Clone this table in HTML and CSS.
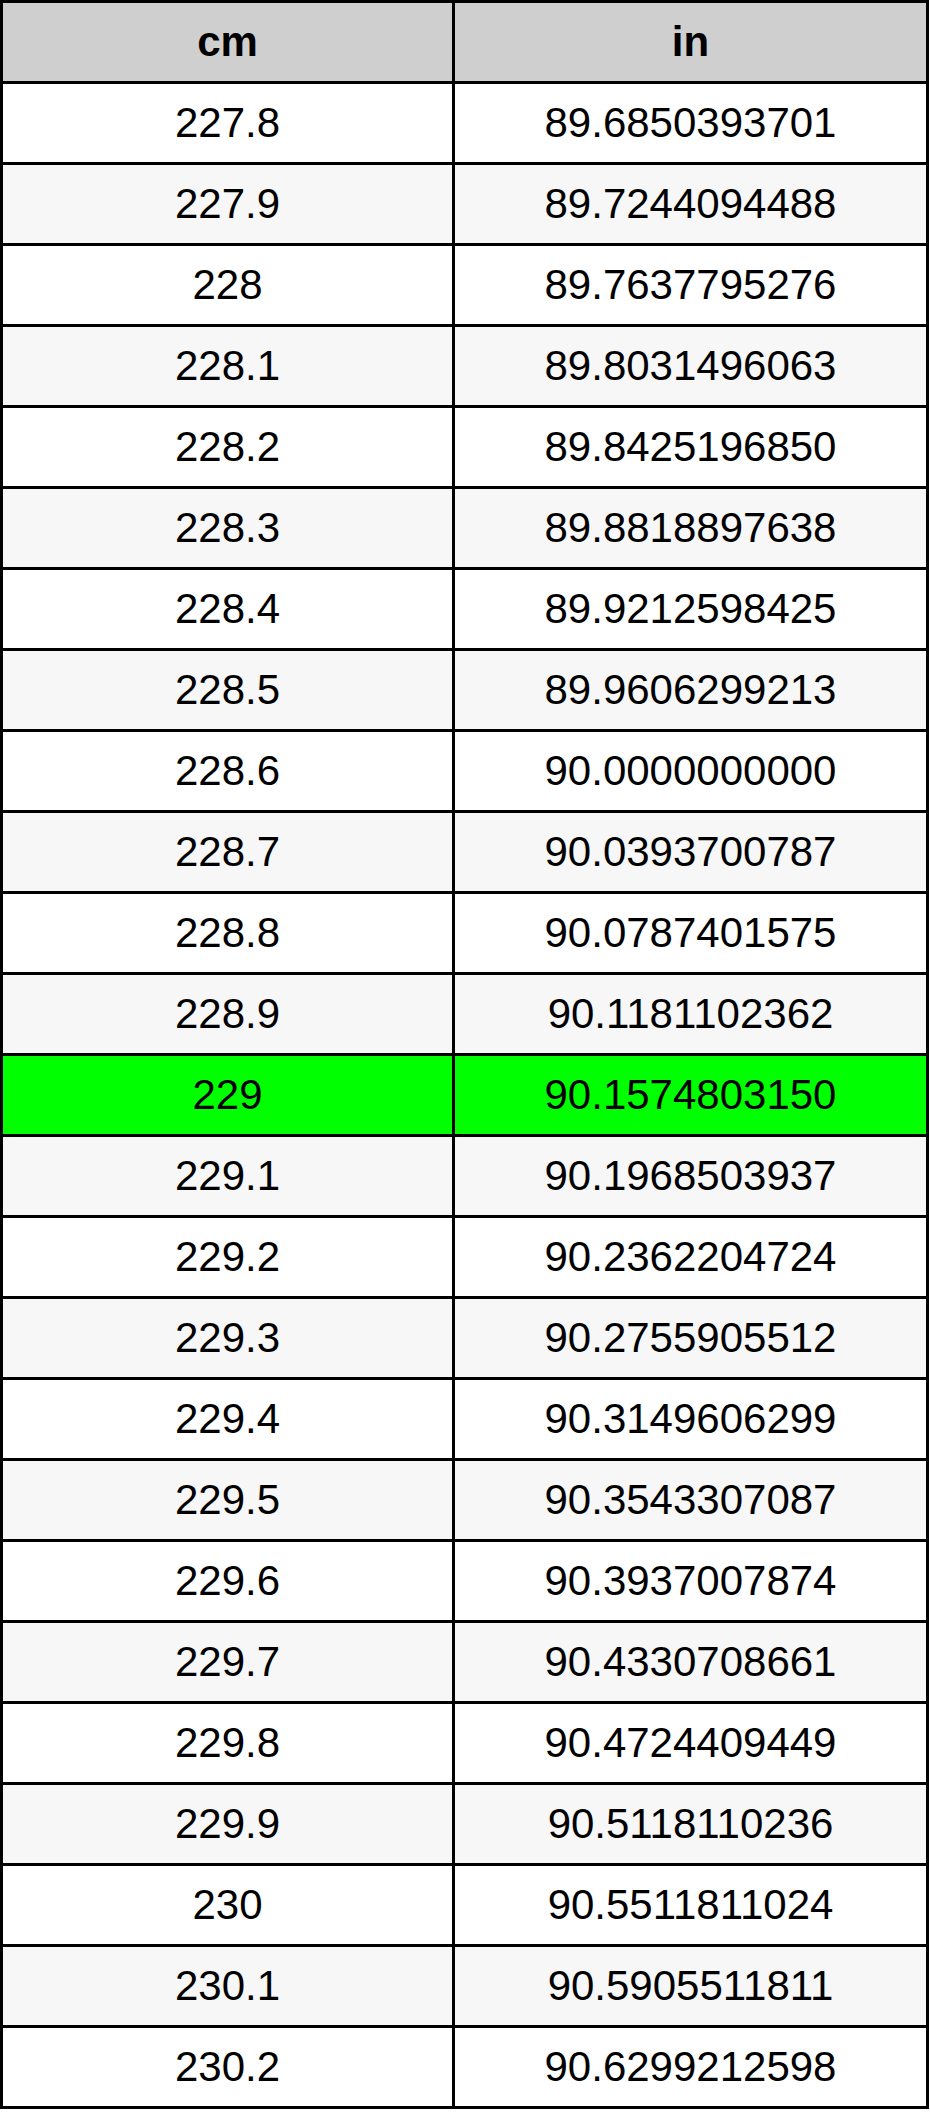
FILE: index.html
```html
<!DOCTYPE html>
<html>
<head>
<meta charset="utf-8">
<title>cm to in</title>
<link rel="stylesheet" href="styles.css">
</head>
<body>
<table class="conv">
<thead>
<tr><th class="c1">cm</th><th class="c2">in</th></tr>
</thead>
<tbody>
<tr><td>227.8</td><td>89.6850393701</td></tr>
<tr class="alt"><td>227.9</td><td>89.7244094488</td></tr>
<tr><td>228</td><td>89.7637795276</td></tr>
<tr class="alt"><td>228.1</td><td>89.8031496063</td></tr>
<tr><td>228.2</td><td>89.8425196850</td></tr>
<tr class="alt"><td>228.3</td><td>89.8818897638</td></tr>
<tr><td>228.4</td><td>89.9212598425</td></tr>
<tr class="alt"><td>228.5</td><td>89.9606299213</td></tr>
<tr><td>228.6</td><td>90.0000000000</td></tr>
<tr class="alt"><td>228.7</td><td>90.0393700787</td></tr>
<tr><td>228.8</td><td>90.0787401575</td></tr>
<tr class="alt"><td>228.9</td><td>90.1181102362</td></tr>
<tr class="hl"><td>229</td><td>90.1574803150</td></tr>
<tr class="alt"><td>229.1</td><td>90.1968503937</td></tr>
<tr><td>229.2</td><td>90.2362204724</td></tr>
<tr class="alt"><td>229.3</td><td>90.2755905512</td></tr>
<tr><td>229.4</td><td>90.3149606299</td></tr>
<tr class="alt"><td>229.5</td><td>90.3543307087</td></tr>
<tr><td>229.6</td><td>90.3937007874</td></tr>
<tr class="alt"><td>229.7</td><td>90.4330708661</td></tr>
<tr><td>229.8</td><td>90.4724409449</td></tr>
<tr class="alt"><td>229.9</td><td>90.5118110236</td></tr>
<tr><td>230</td><td>90.5511811024</td></tr>
<tr class="alt"><td>230.1</td><td>90.5905511811</td></tr>
<tr><td>230.2</td><td>90.6299212598</td></tr>
</tbody>
</table>
</body>
</html>
```
FILE: styles.css
```css
html, body {
  margin: 0;
  padding: 0;
  background: #ffffff;
}

.conv {
  border-collapse: separate;
  border-spacing: 0;
  border-left: 3px solid #000;
  border-top: 3px solid #000;
  font-family: "Liberation Sans", Arial, sans-serif;
  font-size: 42px;
  color: #000;
}

.conv th,
.conv td {
  height: 78px;
  padding: 0;
  border-right: 3px solid #000;
  border-bottom: 3px solid #000;
  text-align: center;
  vertical-align: middle;
  line-height: 1;
}

.conv th {
  background: #cfcfcf;
  font-weight: bold;
}

.conv .c1 { width: 449px; }
.conv .c2 { width: 471px; }

.conv tbody tr { background: #ffffff; }
.conv tbody tr.alt { background: #f7f7f7; }
.conv tbody tr.hl { background: #00ff00; }
```
